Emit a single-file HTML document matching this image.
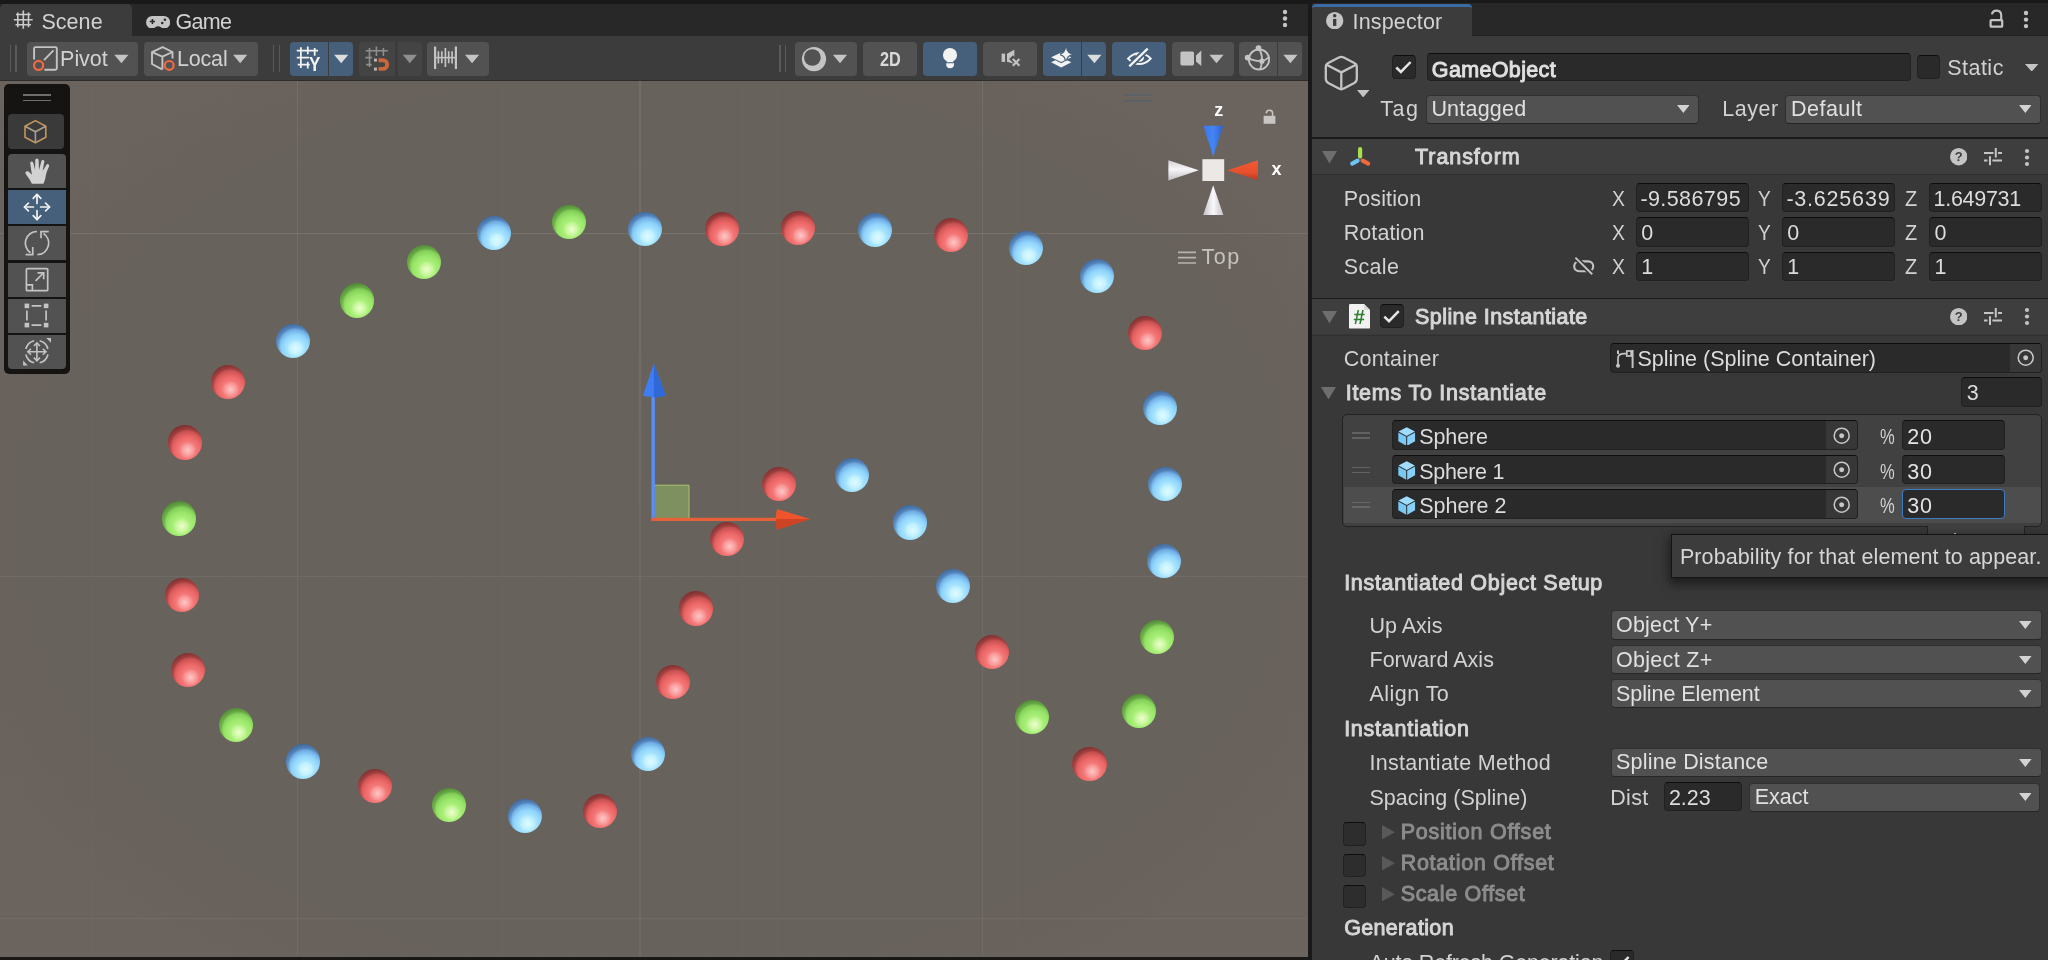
<!DOCTYPE html>
<html lang="en"><head><meta charset="utf-8"><title>Unity - Spline Instantiate</title><style>
html,body{margin:0;padding:0;background:#191919;}
body{width:2048px;height:960px;overflow:hidden;position:relative;font-family:"Liberation Sans",sans-serif;}
.b{position:absolute;box-sizing:border-box;display:block;}
.t{position:absolute;white-space:pre;line-height:1;}
#root{position:absolute;left:0;top:0;width:2048px;height:960px;will-change:transform;}
</style></head><body><div id="root">
<div class="b" style="left:0.00px;top:0.00px;width:1308.00px;height:3.50px;background:#191919;"></div>
<div class="b" style="left:0.00px;top:3.50px;width:1308.00px;height:32.00px;background:#282828;"></div>
<div class="b" style="left:0.00px;top:4.00px;width:132.00px;height:32.00px;background:#3c3c3c;border-radius:5px 5px 0 0;"></div>
<span class="t" id="t1" style="left:41.40px;top:11.70px;font-size:21.5px;color:#d2d2d2;letter-spacing:0.058px;">Scene</span>
<svg class="b" style="left:145.80px;top:15.70px;" width="24.20" height="12.50" viewBox="0 0 25 13"><path d="M6.4 0H18.6A6.4 6.4 0 0 1 25 6.4V7A6 6 0 0 1 19 13A6 6 0 0 1 15.4 11.6Q14 10.6 12.5 10.6Q11 10.6 9.6 11.6A6 6 0 0 1 6 13A6 6 0 0 1 0 7V6.4A6.4 6.4 0 0 1 6.4 0Z" fill="#c4c4c4"/><path d="M6.6 3V8.4M3.9 5.7H9.3" stroke="#282828" stroke-width="1.6" fill="none"/><circle cx="19.6" cy="4" r="1.3" fill="#282828"/><circle cx="16.8" cy="7.4" r="1.3" fill="#282828"/></svg>
<span class="t" id="t2" style="left:175.60px;top:11.70px;font-size:21.5px;color:#d2d2d2;letter-spacing:-0.754px;">Game</span>
<svg class="b" style="left:1281.30px;top:8.40px;" width="8.00" height="21.00" viewBox="0 0 8 21.0"><circle cx="4" cy="4.00" r="2.2" fill="#c4c4c4"/><circle cx="4" cy="10.50" r="2.2" fill="#c4c4c4"/><circle cx="4" cy="17.00" r="2.2" fill="#c4c4c4"/></svg>
<div class="b" style="left:0.00px;top:35.50px;width:1308.00px;height:45.00px;background:#3c3c3c;"></div>
<div class="b" style="left:0.00px;top:79.60px;width:1308.00px;height:1.00px;background:#2c2c2c;"></div>
<div class="b" style="left:9.80px;top:44.60px;width:1.30px;height:27.40px;background:#5a5a5a;"></div>
<div class="b" style="left:15.40px;top:44.60px;width:1.30px;height:27.40px;background:#5a5a5a;"></div>
<div class="b" style="left:273.20px;top:44.60px;width:1.30px;height:27.40px;background:#5a5a5a;"></div>
<div class="b" style="left:279.00px;top:44.60px;width:1.30px;height:27.40px;background:#5a5a5a;"></div>
<div class="b" style="left:779.40px;top:44.60px;width:1.30px;height:27.40px;background:#5a5a5a;"></div>
<div class="b" style="left:784.60px;top:44.60px;width:1.30px;height:27.40px;background:#5a5a5a;"></div>
<div class="b" style="left:27.00px;top:41.50px;width:111.20px;height:34.00px;background:#525252;border-radius:4px;"></div>
<span class="t" id="t3" style="left:60.10px;top:49.00px;font-size:21.5px;color:#d2d2d2;letter-spacing:-0.053px;">Pivot</span>
<div class="b" style="left:143.80px;top:41.50px;width:113.80px;height:34.00px;background:#525252;border-radius:4px;"></div>
<span class="t" id="t4" style="left:176.90px;top:49.00px;font-size:21.5px;color:#d2d2d2;letter-spacing:-0.152px;">Local</span>
<div class="b" style="left:290.00px;top:41.50px;width:37.80px;height:34.00px;background:#46607c;border-radius:4px 0 0 4px;"></div>
<div class="b" style="left:329.20px;top:41.50px;width:24.10px;height:34.00px;background:#46607c;border-radius:0 4px 4px 0;"></div>
<div class="b" style="left:359.20px;top:41.50px;width:36.30px;height:34.00px;background:#444444;border-radius:4px 0 0 4px;"></div>
<div class="b" style="left:398.20px;top:41.50px;width:23.40px;height:34.00px;background:#444444;border-radius:0 4px 4px 0;"></div>
<div class="b" style="left:427.40px;top:41.50px;width:62.00px;height:34.00px;background:#525252;border-radius:4px;"></div>
<div class="b" style="left:795.40px;top:41.50px;width:61.80px;height:34.00px;background:#525252;border-radius:4px;"></div>
<div class="b" style="left:862.60px;top:41.50px;width:54.60px;height:34.00px;background:#525252;border-radius:4px;"></div>
<span class="t" id="t5" style="left:879.80px;top:50.41px;font-size:19.6px;color:#dadada;font-weight:bold;transform:scaleX(0.83);transform-origin:0 50%;">2D</span>
<div class="b" style="left:922.60px;top:41.50px;width:54.90px;height:34.00px;background:#46607c;border-radius:4px;"></div>
<div class="b" style="left:982.90px;top:41.50px;width:54.50px;height:34.00px;background:#525252;border-radius:4px;"></div>
<div class="b" style="left:1042.80px;top:41.50px;width:37.80px;height:34.00px;background:#46607c;border-radius:4px 0 0 4px;"></div>
<div class="b" style="left:1082.20px;top:41.50px;width:24.10px;height:34.00px;background:#46607c;border-radius:0 4px 4px 0;"></div>
<div class="b" style="left:1112.10px;top:41.50px;width:54.30px;height:34.00px;background:#46607c;border-radius:4px;"></div>
<div class="b" style="left:1172.10px;top:41.50px;width:61.90px;height:34.00px;background:#525252;border-radius:4px;"></div>
<div class="b" style="left:1239.20px;top:41.50px;width:37.50px;height:34.00px;background:#525252;border-radius:4px 0 0 4px;"></div>
<div class="b" style="left:1278.40px;top:41.50px;width:23.40px;height:34.00px;background:#525252;border-radius:0 4px 4px 0;"></div>
<div class="b" style="left:0;top:80.5px;width:1308px;height:876.5px;overflow:hidden;background:radial-gradient(ellipse 760px 540px at 655px 440px,#68625c 0%,#68625c 78%,#69625c 90%,#6b635d 100%);"><div class="b" style="left:22.72px;top:0;width:1.4px;height:877px;background:rgba(255,255,255,0.013);"></div><div class="b" style="left:56.98px;top:0;width:1.4px;height:877px;background:rgba(255,255,255,0.013);"></div><div class="b" style="left:91.24px;top:0;width:1.4px;height:877px;background:rgba(255,255,255,0.013);"></div><div class="b" style="left:125.50px;top:0;width:1.4px;height:877px;background:rgba(255,255,255,0.013);"></div><div class="b" style="left:159.76px;top:0;width:1.4px;height:877px;background:rgba(255,255,255,0.013);"></div><div class="b" style="left:194.02px;top:0;width:1.4px;height:877px;background:rgba(255,255,255,0.013);"></div><div class="b" style="left:228.28px;top:0;width:1.4px;height:877px;background:rgba(255,255,255,0.013);"></div><div class="b" style="left:262.54px;top:0;width:1.4px;height:877px;background:rgba(255,255,255,0.013);"></div><div class="b" style="left:296.80px;top:0;width:1.4px;height:877px;background:linear-gradient(180deg,rgba(255,255,255,0.07) 0%,rgba(255,255,255,0.07) 25%,rgba(255,255,255,0.05) 55%,rgba(255,255,255,0.05) 100%);"></div><div class="b" style="left:331.06px;top:0;width:1.4px;height:877px;background:rgba(255,255,255,0.013);"></div><div class="b" style="left:365.32px;top:0;width:1.4px;height:877px;background:rgba(255,255,255,0.013);"></div><div class="b" style="left:399.58px;top:0;width:1.4px;height:877px;background:rgba(255,255,255,0.013);"></div><div class="b" style="left:433.84px;top:0;width:1.4px;height:877px;background:rgba(255,255,255,0.013);"></div><div class="b" style="left:468.10px;top:0;width:1.4px;height:877px;background:rgba(255,255,255,0.013);"></div><div class="b" style="left:502.36px;top:0;width:1.4px;height:877px;background:rgba(255,255,255,0.013);"></div><div class="b" style="left:536.62px;top:0;width:1.4px;height:877px;background:rgba(255,255,255,0.013);"></div><div class="b" style="left:570.88px;top:0;width:1.4px;height:877px;background:rgba(255,255,255,0.013);"></div><div class="b" style="left:605.14px;top:0;width:1.4px;height:877px;background:rgba(255,255,255,0.013);"></div><div class="b" style="left:639.40px;top:0;width:1.4px;height:877px;background:linear-gradient(180deg,rgba(255,255,255,0.07) 0%,rgba(255,255,255,0.07) 25%,rgba(255,255,255,0.05) 55%,rgba(255,255,255,0.05) 100%);"></div><div class="b" style="left:673.66px;top:0;width:1.4px;height:877px;background:rgba(255,255,255,0.013);"></div><div class="b" style="left:707.92px;top:0;width:1.4px;height:877px;background:rgba(255,255,255,0.013);"></div><div class="b" style="left:742.18px;top:0;width:1.4px;height:877px;background:rgba(255,255,255,0.013);"></div><div class="b" style="left:776.44px;top:0;width:1.4px;height:877px;background:rgba(255,255,255,0.013);"></div><div class="b" style="left:810.70px;top:0;width:1.4px;height:877px;background:rgba(255,255,255,0.013);"></div><div class="b" style="left:844.96px;top:0;width:1.4px;height:877px;background:rgba(255,255,255,0.013);"></div><div class="b" style="left:879.22px;top:0;width:1.4px;height:877px;background:rgba(255,255,255,0.013);"></div><div class="b" style="left:913.48px;top:0;width:1.4px;height:877px;background:rgba(255,255,255,0.013);"></div><div class="b" style="left:947.74px;top:0;width:1.4px;height:877px;background:rgba(255,255,255,0.013);"></div><div class="b" style="left:982.00px;top:0;width:1.4px;height:877px;background:linear-gradient(180deg,rgba(255,255,255,0.07) 0%,rgba(255,255,255,0.07) 25%,rgba(255,255,255,0.05) 55%,rgba(255,255,255,0.05) 100%);"></div><div class="b" style="left:1016.26px;top:0;width:1.4px;height:877px;background:rgba(255,255,255,0.013);"></div><div class="b" style="left:1050.52px;top:0;width:1.4px;height:877px;background:rgba(255,255,255,0.013);"></div><div class="b" style="left:1084.78px;top:0;width:1.4px;height:877px;background:rgba(255,255,255,0.013);"></div><div class="b" style="left:1119.04px;top:0;width:1.4px;height:877px;background:rgba(255,255,255,0.013);"></div><div class="b" style="left:1153.30px;top:0;width:1.4px;height:877px;background:rgba(255,255,255,0.013);"></div><div class="b" style="left:1187.56px;top:0;width:1.4px;height:877px;background:rgba(255,255,255,0.013);"></div><div class="b" style="left:1221.82px;top:0;width:1.4px;height:877px;background:rgba(255,255,255,0.013);"></div><div class="b" style="left:1256.08px;top:0;width:1.4px;height:877px;background:rgba(255,255,255,0.013);"></div><div class="b" style="left:1290.34px;top:0;width:1.4px;height:877px;background:rgba(255,255,255,0.013);"></div><div class="b" style="left:0;top:15.46px;width:1308px;height:1.2px;background:rgba(255,255,255,0.013);"></div><div class="b" style="left:0;top:49.72px;width:1308px;height:1.2px;background:rgba(255,255,255,0.013);"></div><div class="b" style="left:0;top:83.98px;width:1308px;height:1.2px;background:rgba(255,255,255,0.013);"></div><div class="b" style="left:0;top:118.24px;width:1308px;height:1.2px;background:rgba(255,255,255,0.013);"></div><div class="b" style="left:0;top:152.50px;width:1308px;height:1.2px;background:rgba(255,255,255,0.09);"></div><div class="b" style="left:0;top:186.76px;width:1308px;height:1.2px;background:rgba(255,255,255,0.013);"></div><div class="b" style="left:0;top:221.02px;width:1308px;height:1.2px;background:rgba(255,255,255,0.013);"></div><div class="b" style="left:0;top:255.28px;width:1308px;height:1.2px;background:rgba(255,255,255,0.013);"></div><div class="b" style="left:0;top:289.54px;width:1308px;height:1.2px;background:rgba(255,255,255,0.013);"></div><div class="b" style="left:0;top:323.80px;width:1308px;height:1.2px;background:rgba(255,255,255,0.013);"></div><div class="b" style="left:0;top:358.06px;width:1308px;height:1.2px;background:rgba(255,255,255,0.013);"></div><div class="b" style="left:0;top:392.32px;width:1308px;height:1.2px;background:rgba(255,255,255,0.013);"></div><div class="b" style="left:0;top:426.58px;width:1308px;height:1.2px;background:rgba(255,255,255,0.013);"></div><div class="b" style="left:0;top:460.84px;width:1308px;height:1.2px;background:rgba(255,255,255,0.013);"></div><div class="b" style="left:0;top:495.10px;width:1308px;height:1.2px;background:rgba(255,255,255,0.05);"></div><div class="b" style="left:0;top:529.36px;width:1308px;height:1.2px;background:rgba(255,255,255,0.013);"></div><div class="b" style="left:0;top:563.62px;width:1308px;height:1.2px;background:rgba(255,255,255,0.013);"></div><div class="b" style="left:0;top:597.88px;width:1308px;height:1.2px;background:rgba(255,255,255,0.013);"></div><div class="b" style="left:0;top:632.14px;width:1308px;height:1.2px;background:rgba(255,255,255,0.013);"></div><div class="b" style="left:0;top:666.40px;width:1308px;height:1.2px;background:rgba(255,255,255,0.013);"></div><div class="b" style="left:0;top:700.66px;width:1308px;height:1.2px;background:rgba(255,255,255,0.013);"></div><div class="b" style="left:0;top:734.92px;width:1308px;height:1.2px;background:rgba(255,255,255,0.013);"></div><div class="b" style="left:0;top:769.18px;width:1308px;height:1.2px;background:rgba(255,255,255,0.013);"></div><div class="b" style="left:0;top:803.44px;width:1308px;height:1.2px;background:rgba(255,255,255,0.013);"></div><div class="b" style="left:0;top:837.70px;width:1308px;height:1.2px;background:rgba(255,255,255,0.05);"></div><div class="b" style="left:0;top:871.96px;width:1308px;height:1.2px;background:rgba(255,255,255,0.013);"></div><div class="b" style="left:477.00px;top:135.00px;width:34.2px;height:34.2px;border-radius:50%;background:radial-gradient(circle 8.5px at 58% 72%, rgba(235,255,255,0.8) 0%, rgba(255,255,255,0) 100%),radial-gradient(circle 17.5px at 57% 61%, rgba(0,0,0,0) 0%, rgba(0,0,0,0) 86%, rgba(0,0,0,0.16) 100%),radial-gradient(circle 26px at 58% 72%, #b4ecff 0%, #b4ecff 22%, #90d4fc 52%, #6098d8 82%, #4a78b4 100%);"></div><div class="b" style="left:552.30px;top:124.40px;width:34.2px;height:34.2px;border-radius:50%;background:radial-gradient(circle 8.5px at 58% 72%, rgba(255,255,225,0.8) 0%, rgba(255,255,255,0) 100%),radial-gradient(circle 17.5px at 57% 61%, rgba(0,0,0,0) 0%, rgba(0,0,0,0) 86%, rgba(0,0,0,0.16) 100%),radial-gradient(circle 26px at 58% 72%, #b2f482 0%, #b2f482 22%, #9ae66a 52%, #78c450 82%, #5c9840 100%);"></div><div class="b" style="left:627.90px;top:131.20px;width:34.2px;height:34.2px;border-radius:50%;background:radial-gradient(circle 8.5px at 58% 72%, rgba(235,255,255,0.8) 0%, rgba(255,255,255,0) 100%),radial-gradient(circle 17.5px at 57% 61%, rgba(0,0,0,0) 0%, rgba(0,0,0,0) 86%, rgba(0,0,0,0.16) 100%),radial-gradient(circle 26px at 58% 72%, #b4ecff 0%, #b4ecff 22%, #90d4fc 52%, #6098d8 82%, #4a78b4 100%);"></div><div class="b" style="left:406.90px;top:164.80px;width:34.2px;height:34.2px;border-radius:50%;background:radial-gradient(circle 8.5px at 58% 72%, rgba(255,255,225,0.8) 0%, rgba(255,255,255,0) 100%),radial-gradient(circle 17.5px at 57% 61%, rgba(0,0,0,0) 0%, rgba(0,0,0,0) 86%, rgba(0,0,0,0.16) 100%),radial-gradient(circle 26px at 58% 72%, #b2f482 0%, #b2f482 22%, #9ae66a 52%, #78c450 82%, #5c9840 100%);"></div><div class="b" style="left:339.90px;top:202.90px;width:34.2px;height:34.2px;border-radius:50%;background:radial-gradient(circle 8.5px at 58% 72%, rgba(255,255,225,0.8) 0%, rgba(255,255,255,0) 100%),radial-gradient(circle 17.5px at 57% 61%, rgba(0,0,0,0) 0%, rgba(0,0,0,0) 86%, rgba(0,0,0,0.16) 100%),radial-gradient(circle 26px at 58% 72%, #b2f482 0%, #b2f482 22%, #9ae66a 52%, #78c450 82%, #5c9840 100%);"></div><div class="b" style="left:275.80px;top:243.20px;width:34.2px;height:34.2px;border-radius:50%;background:radial-gradient(circle 8.5px at 58% 72%, rgba(235,255,255,0.8) 0%, rgba(255,255,255,0) 100%),radial-gradient(circle 17.5px at 57% 61%, rgba(0,0,0,0) 0%, rgba(0,0,0,0) 86%, rgba(0,0,0,0.16) 100%),radial-gradient(circle 26px at 58% 72%, #b4ecff 0%, #b4ecff 22%, #90d4fc 52%, #6098d8 82%, #4a78b4 100%);"></div><div class="b" style="left:211.20px;top:284.40px;width:34.2px;height:34.2px;border-radius:50%;background:radial-gradient(circle 8.5px at 58% 72%, rgba(255,228,228,0.7) 0%, rgba(255,255,255,0) 100%),radial-gradient(circle 17.5px at 57% 61%, rgba(0,0,0,0) 0%, rgba(0,0,0,0) 86%, rgba(0,0,0,0.16) 100%),radial-gradient(circle 26px at 58% 72%, #f88282 0%, #f88282 22%, #ec6666 52%, #b84848 82%, #8c3636 100%);"></div><div class="b" style="left:168.10px;top:344.90px;width:34.2px;height:34.2px;border-radius:50%;background:radial-gradient(circle 8.5px at 58% 72%, rgba(255,228,228,0.7) 0%, rgba(255,255,255,0) 100%),radial-gradient(circle 17.5px at 57% 61%, rgba(0,0,0,0) 0%, rgba(0,0,0,0) 86%, rgba(0,0,0,0.16) 100%),radial-gradient(circle 26px at 58% 72%, #f88282 0%, #f88282 22%, #ec6666 52%, #b84848 82%, #8c3636 100%);"></div><div class="b" style="left:161.50px;top:420.90px;width:34.2px;height:34.2px;border-radius:50%;background:radial-gradient(circle 8.5px at 58% 72%, rgba(255,255,225,0.8) 0%, rgba(255,255,255,0) 100%),radial-gradient(circle 17.5px at 57% 61%, rgba(0,0,0,0) 0%, rgba(0,0,0,0) 86%, rgba(0,0,0,0.16) 100%),radial-gradient(circle 26px at 58% 72%, #b2f482 0%, #b2f482 22%, #9ae66a 52%, #78c450 82%, #5c9840 100%);"></div><div class="b" style="left:165.30px;top:497.10px;width:34.2px;height:34.2px;border-radius:50%;background:radial-gradient(circle 8.5px at 58% 72%, rgba(255,228,228,0.7) 0%, rgba(255,255,255,0) 100%),radial-gradient(circle 17.5px at 57% 61%, rgba(0,0,0,0) 0%, rgba(0,0,0,0) 86%, rgba(0,0,0,0.16) 100%),radial-gradient(circle 26px at 58% 72%, #f88282 0%, #f88282 22%, #ec6666 52%, #b84848 82%, #8c3636 100%);"></div><div class="b" style="left:171.30px;top:572.70px;width:34.2px;height:34.2px;border-radius:50%;background:radial-gradient(circle 8.5px at 58% 72%, rgba(255,228,228,0.7) 0%, rgba(255,255,255,0) 100%),radial-gradient(circle 17.5px at 57% 61%, rgba(0,0,0,0) 0%, rgba(0,0,0,0) 86%, rgba(0,0,0,0.16) 100%),radial-gradient(circle 26px at 58% 72%, #f88282 0%, #f88282 22%, #ec6666 52%, #b84848 82%, #8c3636 100%);"></div><div class="b" style="left:218.50px;top:627.70px;width:34.2px;height:34.2px;border-radius:50%;background:radial-gradient(circle 8.5px at 58% 72%, rgba(255,255,225,0.8) 0%, rgba(255,255,255,0) 100%),radial-gradient(circle 17.5px at 57% 61%, rgba(0,0,0,0) 0%, rgba(0,0,0,0) 86%, rgba(0,0,0,0.16) 100%),radial-gradient(circle 26px at 58% 72%, #b2f482 0%, #b2f482 22%, #9ae66a 52%, #78c450 82%, #5c9840 100%);"></div><div class="b" style="left:285.90px;top:663.90px;width:34.2px;height:34.2px;border-radius:50%;background:radial-gradient(circle 8.5px at 58% 72%, rgba(235,255,255,0.8) 0%, rgba(255,255,255,0) 100%),radial-gradient(circle 17.5px at 57% 61%, rgba(0,0,0,0) 0%, rgba(0,0,0,0) 86%, rgba(0,0,0,0.16) 100%),radial-gradient(circle 26px at 58% 72%, #b4ecff 0%, #b4ecff 22%, #90d4fc 52%, #6098d8 82%, #4a78b4 100%);"></div><div class="b" style="left:357.80px;top:688.70px;width:34.2px;height:34.2px;border-radius:50%;background:radial-gradient(circle 8.5px at 58% 72%, rgba(255,228,228,0.7) 0%, rgba(255,255,255,0) 100%),radial-gradient(circle 17.5px at 57% 61%, rgba(0,0,0,0) 0%, rgba(0,0,0,0) 86%, rgba(0,0,0,0.16) 100%),radial-gradient(circle 26px at 58% 72%, #f88282 0%, #f88282 22%, #ec6666 52%, #b84848 82%, #8c3636 100%);"></div><div class="b" style="left:432.10px;top:707.50px;width:34.2px;height:34.2px;border-radius:50%;background:radial-gradient(circle 8.5px at 58% 72%, rgba(255,255,225,0.8) 0%, rgba(255,255,255,0) 100%),radial-gradient(circle 17.5px at 57% 61%, rgba(0,0,0,0) 0%, rgba(0,0,0,0) 86%, rgba(0,0,0,0.16) 100%),radial-gradient(circle 26px at 58% 72%, #b2f482 0%, #b2f482 22%, #9ae66a 52%, #78c450 82%, #5c9840 100%);"></div><div class="b" style="left:507.70px;top:718.50px;width:34.2px;height:34.2px;border-radius:50%;background:radial-gradient(circle 8.5px at 58% 72%, rgba(235,255,255,0.8) 0%, rgba(255,255,255,0) 100%),radial-gradient(circle 17.5px at 57% 61%, rgba(0,0,0,0) 0%, rgba(0,0,0,0) 86%, rgba(0,0,0,0.16) 100%),radial-gradient(circle 26px at 58% 72%, #b4ecff 0%, #b4ecff 22%, #90d4fc 52%, #6098d8 82%, #4a78b4 100%);"></div><div class="b" style="left:583.30px;top:713.40px;width:34.2px;height:34.2px;border-radius:50%;background:radial-gradient(circle 8.5px at 58% 72%, rgba(255,228,228,0.7) 0%, rgba(255,255,255,0) 100%),radial-gradient(circle 17.5px at 57% 61%, rgba(0,0,0,0) 0%, rgba(0,0,0,0) 86%, rgba(0,0,0,0.16) 100%),radial-gradient(circle 26px at 58% 72%, #f88282 0%, #f88282 22%, #ec6666 52%, #b84848 82%, #8c3636 100%);"></div><div class="b" style="left:630.90px;top:656.60px;width:34.2px;height:34.2px;border-radius:50%;background:radial-gradient(circle 8.5px at 58% 72%, rgba(235,255,255,0.8) 0%, rgba(255,255,255,0) 100%),radial-gradient(circle 17.5px at 57% 61%, rgba(0,0,0,0) 0%, rgba(0,0,0,0) 86%, rgba(0,0,0,0.16) 100%),radial-gradient(circle 26px at 58% 72%, #b4ecff 0%, #b4ecff 22%, #90d4fc 52%, #6098d8 82%, #4a78b4 100%);"></div><div class="b" style="left:704.80px;top:131.20px;width:34.2px;height:34.2px;border-radius:50%;background:radial-gradient(circle 8.5px at 58% 72%, rgba(255,228,228,0.7) 0%, rgba(255,255,255,0) 100%),radial-gradient(circle 17.5px at 57% 61%, rgba(0,0,0,0) 0%, rgba(0,0,0,0) 86%, rgba(0,0,0,0.16) 100%),radial-gradient(circle 26px at 58% 72%, #f88282 0%, #f88282 22%, #ec6666 52%, #b84848 82%, #8c3636 100%);"></div><div class="b" style="left:780.90px;top:130.40px;width:34.2px;height:34.2px;border-radius:50%;background:radial-gradient(circle 8.5px at 58% 72%, rgba(255,228,228,0.7) 0%, rgba(255,255,255,0) 100%),radial-gradient(circle 17.5px at 57% 61%, rgba(0,0,0,0) 0%, rgba(0,0,0,0) 86%, rgba(0,0,0,0.16) 100%),radial-gradient(circle 26px at 58% 72%, #f88282 0%, #f88282 22%, #ec6666 52%, #b84848 82%, #8c3636 100%);"></div><div class="b" style="left:857.50px;top:132.30px;width:34.2px;height:34.2px;border-radius:50%;background:radial-gradient(circle 8.5px at 58% 72%, rgba(235,255,255,0.8) 0%, rgba(255,255,255,0) 100%),radial-gradient(circle 17.5px at 57% 61%, rgba(0,0,0,0) 0%, rgba(0,0,0,0) 86%, rgba(0,0,0,0.16) 100%),radial-gradient(circle 26px at 58% 72%, #b4ecff 0%, #b4ecff 22%, #90d4fc 52%, #6098d8 82%, #4a78b4 100%);"></div><div class="b" style="left:933.60px;top:137.80px;width:34.2px;height:34.2px;border-radius:50%;background:radial-gradient(circle 8.5px at 58% 72%, rgba(255,228,228,0.7) 0%, rgba(255,255,255,0) 100%),radial-gradient(circle 17.5px at 57% 61%, rgba(0,0,0,0) 0%, rgba(0,0,0,0) 86%, rgba(0,0,0,0.16) 100%),radial-gradient(circle 26px at 58% 72%, #f88282 0%, #f88282 22%, #ec6666 52%, #b84848 82%, #8c3636 100%);"></div><div class="b" style="left:1009.20px;top:150.60px;width:34.2px;height:34.2px;border-radius:50%;background:radial-gradient(circle 8.5px at 58% 72%, rgba(235,255,255,0.8) 0%, rgba(255,255,255,0) 100%),radial-gradient(circle 17.5px at 57% 61%, rgba(0,0,0,0) 0%, rgba(0,0,0,0) 86%, rgba(0,0,0,0.16) 100%),radial-gradient(circle 26px at 58% 72%, #b4ecff 0%, #b4ecff 22%, #90d4fc 52%, #6098d8 82%, #4a78b4 100%);"></div><div class="b" style="left:1079.80px;top:178.60px;width:34.2px;height:34.2px;border-radius:50%;background:radial-gradient(circle 8.5px at 58% 72%, rgba(235,255,255,0.8) 0%, rgba(255,255,255,0) 100%),radial-gradient(circle 17.5px at 57% 61%, rgba(0,0,0,0) 0%, rgba(0,0,0,0) 86%, rgba(0,0,0,0.16) 100%),radial-gradient(circle 26px at 58% 72%, #b4ecff 0%, #b4ecff 22%, #90d4fc 52%, #6098d8 82%, #4a78b4 100%);"></div><div class="b" style="left:1127.90px;top:235.40px;width:34.2px;height:34.2px;border-radius:50%;background:radial-gradient(circle 8.5px at 58% 72%, rgba(255,228,228,0.7) 0%, rgba(255,255,255,0) 100%),radial-gradient(circle 17.5px at 57% 61%, rgba(0,0,0,0) 0%, rgba(0,0,0,0) 86%, rgba(0,0,0,0.16) 100%),radial-gradient(circle 26px at 58% 72%, #f88282 0%, #f88282 22%, #ec6666 52%, #b84848 82%, #8c3636 100%);"></div><div class="b" style="left:1142.60px;top:310.60px;width:34.2px;height:34.2px;border-radius:50%;background:radial-gradient(circle 8.5px at 58% 72%, rgba(235,255,255,0.8) 0%, rgba(255,255,255,0) 100%),radial-gradient(circle 17.5px at 57% 61%, rgba(0,0,0,0) 0%, rgba(0,0,0,0) 86%, rgba(0,0,0,0.16) 100%),radial-gradient(circle 26px at 58% 72%, #b4ecff 0%, #b4ecff 22%, #90d4fc 52%, #6098d8 82%, #4a78b4 100%);"></div><div class="b" style="left:1148.10px;top:386.70px;width:34.2px;height:34.2px;border-radius:50%;background:radial-gradient(circle 8.5px at 58% 72%, rgba(235,255,255,0.8) 0%, rgba(255,255,255,0) 100%),radial-gradient(circle 17.5px at 57% 61%, rgba(0,0,0,0) 0%, rgba(0,0,0,0) 86%, rgba(0,0,0,0.16) 100%),radial-gradient(circle 26px at 58% 72%, #b4ecff 0%, #b4ecff 22%, #90d4fc 52%, #6098d8 82%, #4a78b4 100%);"></div><div class="b" style="left:761.70px;top:386.20px;width:34.2px;height:34.2px;border-radius:50%;background:radial-gradient(circle 8.5px at 58% 72%, rgba(255,228,228,0.7) 0%, rgba(255,255,255,0) 100%),radial-gradient(circle 17.5px at 57% 61%, rgba(0,0,0,0) 0%, rgba(0,0,0,0) 86%, rgba(0,0,0,0.16) 100%),radial-gradient(circle 26px at 58% 72%, #f88282 0%, #f88282 22%, #ec6666 52%, #b84848 82%, #8c3636 100%);"></div><div class="b" style="left:834.60px;top:377.00px;width:34.2px;height:34.2px;border-radius:50%;background:radial-gradient(circle 8.5px at 58% 72%, rgba(235,255,255,0.8) 0%, rgba(255,255,255,0) 100%),radial-gradient(circle 17.5px at 57% 61%, rgba(0,0,0,0) 0%, rgba(0,0,0,0) 86%, rgba(0,0,0,0.16) 100%),radial-gradient(circle 26px at 58% 72%, #b4ecff 0%, #b4ecff 22%, #90d4fc 52%, #6098d8 82%, #4a78b4 100%);"></div><div class="b" style="left:892.80px;top:424.90px;width:34.2px;height:34.2px;border-radius:50%;background:radial-gradient(circle 8.5px at 58% 72%, rgba(235,255,255,0.8) 0%, rgba(255,255,255,0) 100%),radial-gradient(circle 17.5px at 57% 61%, rgba(0,0,0,0) 0%, rgba(0,0,0,0) 86%, rgba(0,0,0,0.16) 100%),radial-gradient(circle 26px at 58% 72%, #b4ecff 0%, #b4ecff 22%, #90d4fc 52%, #6098d8 82%, #4a78b4 100%);"></div><div class="b" style="left:710.00px;top:441.40px;width:34.2px;height:34.2px;border-radius:50%;background:radial-gradient(circle 8.5px at 58% 72%, rgba(255,228,228,0.7) 0%, rgba(255,255,255,0) 100%),radial-gradient(circle 17.5px at 57% 61%, rgba(0,0,0,0) 0%, rgba(0,0,0,0) 86%, rgba(0,0,0,0.16) 100%),radial-gradient(circle 26px at 58% 72%, #f88282 0%, #f88282 22%, #ec6666 52%, #b84848 82%, #8c3636 100%);"></div><div class="b" style="left:678.70px;top:510.90px;width:34.2px;height:34.2px;border-radius:50%;background:radial-gradient(circle 8.5px at 58% 72%, rgba(255,228,228,0.7) 0%, rgba(255,255,255,0) 100%),radial-gradient(circle 17.5px at 57% 61%, rgba(0,0,0,0) 0%, rgba(0,0,0,0) 86%, rgba(0,0,0,0.16) 100%),radial-gradient(circle 26px at 58% 72%, #f88282 0%, #f88282 22%, #ec6666 52%, #b84848 82%, #8c3636 100%);"></div><div class="b" style="left:656.30px;top:584.20px;width:34.2px;height:34.2px;border-radius:50%;background:radial-gradient(circle 8.5px at 58% 72%, rgba(255,228,228,0.7) 0%, rgba(255,255,255,0) 100%),radial-gradient(circle 17.5px at 57% 61%, rgba(0,0,0,0) 0%, rgba(0,0,0,0) 86%, rgba(0,0,0,0.16) 100%),radial-gradient(circle 26px at 58% 72%, #f88282 0%, #f88282 22%, #ec6666 52%, #b84848 82%, #8c3636 100%);"></div><div class="b" style="left:936.30px;top:488.40px;width:34.2px;height:34.2px;border-radius:50%;background:radial-gradient(circle 8.5px at 58% 72%, rgba(235,255,255,0.8) 0%, rgba(255,255,255,0) 100%),radial-gradient(circle 17.5px at 57% 61%, rgba(0,0,0,0) 0%, rgba(0,0,0,0) 86%, rgba(0,0,0,0.16) 100%),radial-gradient(circle 26px at 58% 72%, #b4ecff 0%, #b4ecff 22%, #90d4fc 52%, #6098d8 82%, #4a78b4 100%);"></div><div class="b" style="left:974.80px;top:554.40px;width:34.2px;height:34.2px;border-radius:50%;background:radial-gradient(circle 8.5px at 58% 72%, rgba(255,228,228,0.7) 0%, rgba(255,255,255,0) 100%),radial-gradient(circle 17.5px at 57% 61%, rgba(0,0,0,0) 0%, rgba(0,0,0,0) 86%, rgba(0,0,0,0.16) 100%),radial-gradient(circle 26px at 58% 72%, #f88282 0%, #f88282 22%, #ec6666 52%, #b84848 82%, #8c3636 100%);"></div><div class="b" style="left:1015.20px;top:619.00px;width:34.2px;height:34.2px;border-radius:50%;background:radial-gradient(circle 8.5px at 58% 72%, rgba(255,255,225,0.8) 0%, rgba(255,255,255,0) 100%),radial-gradient(circle 17.5px at 57% 61%, rgba(0,0,0,0) 0%, rgba(0,0,0,0) 86%, rgba(0,0,0,0.16) 100%),radial-gradient(circle 26px at 58% 72%, #b2f482 0%, #b2f482 22%, #9ae66a 52%, #78c450 82%, #5c9840 100%);"></div><div class="b" style="left:1072.40px;top:666.20px;width:34.2px;height:34.2px;border-radius:50%;background:radial-gradient(circle 8.5px at 58% 72%, rgba(255,228,228,0.7) 0%, rgba(255,255,255,0) 100%),radial-gradient(circle 17.5px at 57% 61%, rgba(0,0,0,0) 0%, rgba(0,0,0,0) 86%, rgba(0,0,0,0.16) 100%),radial-gradient(circle 26px at 58% 72%, #f88282 0%, #f88282 22%, #ec6666 52%, #b84848 82%, #8c3636 100%);"></div><div class="b" style="left:1121.50px;top:613.50px;width:34.2px;height:34.2px;border-radius:50%;background:radial-gradient(circle 8.5px at 58% 72%, rgba(255,255,225,0.8) 0%, rgba(255,255,255,0) 100%),radial-gradient(circle 17.5px at 57% 61%, rgba(0,0,0,0) 0%, rgba(0,0,0,0) 86%, rgba(0,0,0,0.16) 100%),radial-gradient(circle 26px at 58% 72%, #b2f482 0%, #b2f482 22%, #9ae66a 52%, #78c450 82%, #5c9840 100%);"></div><div class="b" style="left:1139.80px;top:539.30px;width:34.2px;height:34.2px;border-radius:50%;background:radial-gradient(circle 8.5px at 58% 72%, rgba(255,255,225,0.8) 0%, rgba(255,255,255,0) 100%),radial-gradient(circle 17.5px at 57% 61%, rgba(0,0,0,0) 0%, rgba(0,0,0,0) 86%, rgba(0,0,0,0.16) 100%),radial-gradient(circle 26px at 58% 72%, #b2f482 0%, #b2f482 22%, #9ae66a 52%, #78c450 82%, #5c9840 100%);"></div><div class="b" style="left:1147.20px;top:463.20px;width:34.2px;height:34.2px;border-radius:50%;background:radial-gradient(circle 8.5px at 58% 72%, rgba(235,255,255,0.8) 0%, rgba(255,255,255,0) 100%),radial-gradient(circle 17.5px at 57% 61%, rgba(0,0,0,0) 0%, rgba(0,0,0,0) 86%, rgba(0,0,0,0.16) 100%),radial-gradient(circle 26px at 58% 72%, #b4ecff 0%, #b4ecff 22%, #90d4fc 52%, #6098d8 82%, #4a78b4 100%);"></div></div>
<div class="b" style="left:3.80px;top:83.80px;width:66.40px;height:290.00px;background:#161412;border-radius:5px;"></div>
<div class="b" style="left:23.40px;top:94.40px;width:27.60px;height:1.40px;background:#6e6e6e;"></div>
<div class="b" style="left:23.40px;top:99.90px;width:27.60px;height:1.40px;background:#6e6e6e;"></div>
<div class="b" style="left:8.40px;top:114.40px;width:55.80px;height:34.40px;background:#3a3a3a;border-radius:4px;"></div>
<div class="b" style="left:8.40px;top:154.00px;width:57.40px;height:34.20px;background:#525252;border-radius:4px 4px 0 0;"></div>
<div class="b" style="left:8.40px;top:190.10px;width:57.40px;height:34.20px;background:#46607c;border-radius:0;"></div>
<div class="b" style="left:8.40px;top:226.30px;width:57.40px;height:34.20px;background:#525252;border-radius:0;"></div>
<div class="b" style="left:8.40px;top:262.60px;width:57.40px;height:34.20px;background:#525252;border-radius:0;"></div>
<div class="b" style="left:8.40px;top:298.80px;width:57.40px;height:34.20px;background:#525252;border-radius:0;"></div>
<div class="b" style="left:8.40px;top:335.00px;width:57.40px;height:34.20px;background:#525252;border-radius:0 0 4px 4px;"></div>
<svg class="b" style="left:24.70px;top:157.60px;" width="26.20" height="26.05" viewBox="0 0 25 26" preserveAspectRatio="none"><path d="M6.6 25.6Q4.6 21 1 16.4Q-0.4 14.2 1.4 13.4Q3 12.8 4.6 14.6L6.6 16.8L5 5.4Q4.8 3.6 6.2 3.4Q7.6 3.2 8 5L9.6 12L9.8 2.2Q9.8 0.4 11.4 0.4Q13 0.4 13 2.2L13.4 12L15.6 3.2Q16 1.6 17.4 2Q18.8 2.4 18.4 4L16.8 13L20.4 7Q21.2 5.6 22.4 6.4Q23.6 7.2 22.8 8.8Q20.4 14 19.8 18Q19.4 22 17.6 25.6Z" fill="#d2d2d2"/></svg>
<svg class="b" style="left:23.00px;top:193.40px;" width="28.00" height="28.00" viewBox="0 0 28 28"><g fill="none" stroke="#f2f2f2" stroke-width="1.7" stroke-linecap="round" stroke-linejoin="round"><path d="M14 1.6V10.4M14 17.6V26.4M1.6 14H10.4M17.6 14H26.4"/><path d="M10.2 5.4L14 1.4L17.8 5.4M10.2 22.6L14 26.6L17.8 22.6M5.4 10.2L1.4 14L5.4 17.8M22.6 10.2L26.6 14L22.6 17.8"/></g></svg>
<svg class="b" style="left:24.00px;top:230.40px;" width="26.00" height="27.00" viewBox="0 0 26 27"><g fill="none" stroke="#c4c4c4" stroke-width="1.7" stroke-linejoin="miter"><path d="M13 1.5A11.6 11.6 0 0 0 6.5 22.7M13.5 24.7A11.6 11.6 0 0 0 19.5 3.5"/><path d="M1.6 24.7H8.75V17M24.75 1.6H17V8.2"/></g></svg>
<svg class="b" style="left:24.40px;top:303.40px;" width="25.00" height="25.00" viewBox="0 0 25 25"><g fill="#c4c4c4"><rect x="0.6" y="0.6" width="4.6" height="4.6"/><rect x="19.8" y="0.6" width="4.6" height="4.6"/><rect x="0.6" y="19.8" width="4.6" height="4.6"/><rect x="19.8" y="19.8" width="4.6" height="4.6"/></g><g stroke="#c4c4c4" stroke-width="1.7"><path d="M7.6 2.9H17.4M7.6 22.1H17.4M2.9 7.6V17.4M22.1 7.6V17.4"/></g></svg>
<div class="b" style="left:1123.20px;top:94.20px;width:28.40px;height:1.80px;background:#5b6167;"></div>
<div class="b" style="left:1123.20px;top:99.80px;width:28.40px;height:1.80px;background:#5b6167;"></div>
<span class="t" id="t6" style="left:1214.20px;top:101.46px;font-size:18px;color:#ffffff;font-weight:bold;text-transform:none;">z</span>
<span class="t" id="t7" style="left:1271.60px;top:160.06px;font-size:18px;color:#ffffff;font-weight:bold;">x</span>
<svg class="b" style="left:1263.00px;top:109.40px;" width="13.00" height="15.40" viewBox="0 0 13 15.4"><path d="M9.6 7V4.6A3.2 3.2 0 0 0 3.2 4.4" fill="none" stroke="#c8c6c4" stroke-width="1.5"/><rect x="0.6" y="6.8" width="11.8" height="8" fill="#c8c6c4"/></svg>
<svg class="b" style="left:1165.00px;top:123.00px;" width="96.00" height="95.00" viewBox="0 0 96 95"><defs><linearGradient id="gb" x1="0" x2="1"><stop offset="0" stop-color="#3c78ee"/><stop offset="0.5" stop-color="#4484f4"/><stop offset="1" stop-color="#2f60cc"/></linearGradient><linearGradient id="gr" x1="0" x2="0" y1="0" y2="1"><stop offset="0" stop-color="#f05a34"/><stop offset="0.6" stop-color="#e8502c"/><stop offset="1" stop-color="#b83c22"/></linearGradient><linearGradient id="gw1" x1="0" x2="0" y1="0" y2="1"><stop offset="0" stop-color="#d2d0d2"/><stop offset="0.45" stop-color="#f8f6f8"/><stop offset="1" stop-color="#c2c0c4"/></linearGradient><linearGradient id="gw2" x1="0" x2="1"><stop offset="0" stop-color="#c4c2c6"/><stop offset="0.5" stop-color="#f8f8fa"/><stop offset="1" stop-color="#c4c2c6"/></linearGradient></defs><path d="M38.4 2.8H58.2L48.2 33.8Z" fill="url(#gb)"/><path d="M93 37.2V57.2L62.4 47.2Z" fill="url(#gr)"/><path d="M3.4 37.2V57.4L33.8 47.2Z" fill="url(#gw1)"/><path d="M38.2 92H58.4L48.2 62.2Z" fill="url(#gw2)"/><rect x="37.4" y="36.2" width="21.8" height="21.8" fill="#ece8e6"/></svg>
<svg class="b" style="left:1178.20px;top:250.60px;" width="18.00" height="13.40" viewBox="0 0 18 13.4"><g stroke="#b8b4b0" stroke-width="1.7"><path d="M0 1.4H18M0 6.7H18M0 12H18"/></g></svg>
<span class="t" id="t8" style="left:1201.60px;top:247.10px;font-size:21.5px;color:#c6c2be;letter-spacing:1.464px;">Top</span>
<svg class="b" style="left:0.00px;top:0.00px;pointer-events:none;" width="2048.00" height="960.00" viewBox="0 0 2048 960"><g stroke="#cacaca" stroke-width="1.6" fill="none"><path d="M17.8 12.5V27.3M23.3 10.5V28.8M28.5 12.5V27.3M16 14.5H30.7M13.8 19.7H32.7M15.5 24.8H31"/></g><g fill="none" stroke="#c4c4c4" stroke-width="1.9"><path d="M34.1 59.6V48.6Q34.1 47.1 35.6 47.1H55.3Q56.8 47.1 56.8 48.6V68.2Q56.8 69.7 55.3 69.7H44.4"/><path d="M44 60.1L53.5 50.4"/></g><circle cx="38.6" cy="65.4" r="4.55" fill="none" stroke="#f06a44" stroke-width="2.2"/><path d="M114.30000000000001 54.8H128.5L121.4 63.2Z" fill="#c4c4c4"/><g fill="none" stroke="#c4c4c4" stroke-width="1.9" stroke-linejoin="round"><path d="M162 69.4L152 64V52.2L162.6 47.2L172.5 52V58.6"/><path d="M152 52.2L162.4 56.6L172.5 52M162.4 56.6V69.4"/></g><circle cx="169.2" cy="65.4" r="4.4" fill="none" stroke="#f06a44" stroke-width="2.2"/><path d="M233.1 54.8H247.29999999999998L240.2 63.2Z" fill="#c4c4c4"/><g stroke="#f2f2f2" stroke-width="1.75" fill="none"><path d="M300.9 47.3V67.9M307.8 46.4V54.2M307.8 61.7V68.5M314.7 48.1V55.7M296.8 50.7H318M296.8 57.6H309M297.7 64.7H309.7"/></g><text transform="translate(314.6 71.1) scale(0.83 1)" x="0" y="0" text-anchor="middle" font-family="Liberation Sans, sans-serif" font-weight="bold" font-size="20.6" fill="#f2f2f2">Y</text><path d="M334.09999999999997 54.8H348.3L341.2 63.2Z" fill="#dcdcdc"/><g stroke="#8e8e8e" stroke-width="1.6" fill="none"><path d="M369.5 48.1V67M376.4 46.6V56.1M383.4 47.9V56.1M365.7 50.7H387.9M365.4 57.6H372.1M366.1 64.6H371.7"/></g><rect x="374" y="58.6" width="2.9" height="3" fill="#b8b8b8"/><rect x="374" y="67.6" width="2.9" height="3" fill="#b8b8b8"/><path d="M378.5 60.2H382.85A4.35 4.35 0 0 1 382.85 68.9H378.5" fill="none" stroke="#c8663c" stroke-width="3.9"/><path d="M402.7 54.8H416.90000000000003L409.8 63.2Z" fill="#8f8f8f"/><g stroke="#c4c4c4" fill="none"><path d="M435.1 46.4V68.9M455.9 46.4V68.9" stroke-width="2.2"/><path d="M438.4 51.2V63.6M441.8 51.2V63.2M445.4 48.1V67M448.7 51.2V63.2M452.1 51.2V63.6" stroke-width="1.7"/><path d="M435 57.6H456" stroke-width="1.5"/></g><path d="M465.0 54.8H479.20000000000005L472.1 63.2Z" fill="#c4c4c4"/><circle cx="814" cy="59.1" r="12.1" fill="#c4c4c4"/><circle cx="812.35" cy="57.5" r="8.35" fill="#525252"/><path d="M832.9 54.8H847.1L840 63.2Z" fill="#c4c4c4"/><circle cx="950" cy="55" r="7.05" fill="#f2f2f2"/><path d="M946.2 63.2H954V64.6A3.9 3.6 0 0 1 946.2 64.6Z" fill="#f2f2f2"/><path d="M946.8 60H953.2V62.2H946.8Z" fill="#f2f2f2"/><rect x="1001.6" y="53.6" width="3.5" height="8.3" fill="#c4c4c4"/><path d="M1007 53.8L1014.3 49.8V63.8L1007 61.8Z" fill="#c4c4c4"/><path d="M1011 57.2L1021 67.4" stroke="#525252" stroke-width="5.4" fill="none"/><path d="M1012.8 59.1L1019.4 65.7M1019.4 59.1L1012.8 65.7" stroke="#c4c4c4" stroke-width="2.1" fill="none"/><path d="M1051.1 57.2L1061.2 52.4L1071.4 57.2L1061.2 62Z" fill="#f2f2f2"/><path d="M1051.1 62.2L1055.4 60.2L1061.2 63.2L1067 60.2L1071.4 62.2L1061.2 67.6Z" fill="#f2f2f2"/><path d="M1066 47.9Q1066.8 53.4 1072 54.3Q1066.8 55.2 1066 60.3Q1065.2 55.2 1060.3 54.3Q1065.2 53.4 1066 47.9Z" fill="#f2f2f2" stroke="#46607c" stroke-width="2.6" paint-order="stroke"/><path d="M1087.3000000000002 54.8H1101.5L1094.4 63.2Z" fill="#dcdcdc"/><path d="M1128.1 58.6Q1133 53.2 1139.4 53.2Q1145.8 53.2 1150.7 58.6Q1145.8 64 1139.4 64Q1133 64 1128.1 58.6Z" fill="none" stroke="#f2f2f2" stroke-width="2.1"/><circle cx="1139.6" cy="57.4" r="4.4" fill="#f2f2f2"/><path d="M1129.3 66.3L1147.7 48.6" stroke="#46607c" stroke-width="6" fill="none"/><path d="M1129.3 66.3L1147.7 48.6" stroke="#f2f2f2" stroke-width="2.3" fill="none"/><rect x="1180.4" y="51.4" width="13.6" height="14" rx="1.6" fill="#c4c4c4"/><path d="M1196 55.6L1201.3 50.6V66L1196 61.4Z" fill="#c4c4c4"/><path d="M1209.4 54.8H1223.6L1216.5 63.2Z" fill="#c4c4c4"/><g fill="none" stroke="#c4c4c4" stroke-width="1.8"><circle cx="1259" cy="59.4" r="10.1"/><path d="M1258.5 48.1Q1262.6 54 1261.9 61.2Q1261.6 66 1260 69.4M1247.4 57.6Q1253 61.4 1261.9 61.2Q1266 60.4 1268.8 57"/></g><circle cx="1258.5" cy="48.1" r="2.9" fill="#c4c4c4"/><circle cx="1247.6" cy="57.6" r="2.9" fill="#c4c4c4"/><circle cx="1261.9" cy="61.2" r="2.6" fill="#c4c4c4"/><path d="M1283.3000000000002 54.8H1297.5L1290.4 63.2Z" fill="#c4c4c4"/><rect x="654.8" y="485.2" width="34.2" height="33" fill="rgb(146,182,100)" fill-opacity="0.55"/><path d="M654.8 485.2H689V518" fill="none" stroke="#a9c470" stroke-width="1"/><path d="M653.2 520.8V394" stroke="#5b8df2" stroke-width="3.4" fill="none"/><path d="M653.9 363.4L665.6 395.4Q653.9 398.8 642.8 395.4Z" fill="#3f7df2"/><path d="M653.9 363.4L665.6 395.4Q660 397.2 653.9 397.4Z" fill="#3168d8"/><path d="M651.6 519.4H779" stroke="#e8603a" stroke-width="3.2" fill="none"/><path d="M810 518.9L777 509Q774.4 519.4 777 529.8Z" fill="#f0542c"/><path d="M810 518.9L777 529.8Q775.6 524 775.6 518.9Z" fill="#cc4424"/><g fill="none" stroke-width="1.6" stroke-linejoin="round"><path d="M35.4 120.6L45.8 126.2V137.2L35.4 142.8L25 137.2V126.2Z" stroke="#c4965c"/><path d="M25 126.2L35.4 131.8L45.8 126.2" stroke="#b0a08c"/><path d="M35.4 131.8V142.8" stroke="#9aa0a8"/></g><g fill="none" stroke="#c4c4c4" stroke-width="1.7"><rect x="26.4" y="268.6" width="21.3" height="22.1" rx="1"/><path d="M26.4 284.8H32.4V290.7"/><path d="M35.6 280.8L43.4 273M37.5 272.8H43.7V279.2"/></g><g fill="none" stroke="#c4c4c4" stroke-width="1.6"><path d="M47.96 354.51A11.4 11.4 0 0 1 39.66 362.81M34.14 362.81A11.4 11.4 0 0 1 25.84 354.51M25.84 348.99A11.4 11.4 0 0 1 34.14 340.69M39.66 340.69A11.4 11.4 0 0 1 47.96 348.99"/><path d="M36.9 343V360.6M28 351.75H45.8"/><path d="M33.9 346L36.9 342.8L39.9 346M33.9 357.6L36.9 360.8L39.9 357.6M31 348.75L27.8 351.75L31 354.75M42.8 348.75L46 351.75L42.8 354.75"/></g><path d="M46.25 338H51V342.75Z" fill="#c4c4c4"/><path d="M23.1 360.6V365.5H27.75Z" fill="#c4c4c4"/></svg>
<div class="b" style="left:0.00px;top:957.00px;width:1308.00px;height:3.00px;background:#191919;"></div>
<div class="b" style="left:1308.00px;top:0.00px;width:3.50px;height:960.00px;background:#191919;"></div>
<div class="b" style="left:1311.50px;top:3.00px;width:737.00px;height:32.50px;background:#282828;"></div>
<div class="b" style="left:1311.50px;top:35.50px;width:737.00px;height:102.00px;background:#3c3c3c;"></div>
<div class="b" style="left:1311.50px;top:137.50px;width:737.00px;height:823.00px;background:#383838;"></div>
<div class="b" style="left:1311.50px;top:3.50px;width:160.00px;height:32.00px;background:#3c3c3c;border-radius:4px 4px 0 0;border-top:3px solid #3a6ca3;"></div>
<svg class="b" style="left:1326.40px;top:11.90px;" width="17.40" height="17.40" viewBox="0 0 20 20"><circle cx="10" cy="10" r="10" fill="#c4c4c4"/><rect x="8.1" y="8" width="3.8" height="8" fill="#3c3c3c"/><circle cx="10" cy="4.4" r="2" fill="#3c3c3c"/></svg>
<span class="t" id="t9" style="left:1352.60px;top:11.60px;font-size:21.5px;color:#d2d2d2;letter-spacing:0.145px;">Inspector</span>
<svg class="b" style="left:1985.00px;top:6.00px;" width="24.00" height="26.00" viewBox="0 0 24 26"><path d="M6.9 8.4A4.7 4.7 0 0 1 16.2 9.2V13.6" fill="none" stroke="#c4c4c4" stroke-width="2.1"/><rect x="5.6" y="14.2" width="11.6" height="6.5" rx="0.8" fill="none" stroke="#c4c4c4" stroke-width="2.2"/></svg>
<div class="b" style="left:1471.50px;top:34.50px;width:576.50px;height:1.20px;background:#212121;"></div>
<svg class="b" style="left:2021.50px;top:8.50px;" width="8.00" height="21.10" viewBox="0 0 8 21.1"><circle cx="4" cy="4.00" r="2.2" fill="#c4c4c4"/><circle cx="4" cy="10.60" r="2.2" fill="#c4c4c4"/><circle cx="4" cy="17.10" r="2.2" fill="#c4c4c4"/></svg>
<svg class="b" style="left:1323.50px;top:55.00px;" width="35.00" height="36.40" viewBox="0 0 35 36.4"><g fill="none" stroke="#c4c4c4" stroke-width="2.3" stroke-linejoin="round" stroke-linecap="round"><path d="M14.82 2.56Q17.30 1.30 19.78 2.56L30.32 7.94Q32.80 9.20 32.80 11.98L32.80 23.82Q32.80 26.60 30.32 27.93L19.78 33.57Q17.30 34.90 14.82 33.57L4.28 27.93Q1.80 26.60 1.80 23.82L1.80 11.98Q1.80 9.20 4.28 7.94Z"/><path d="M2.6 9.8L17.3 17.4L32 9.8M17.3 17.4V34"/></g></svg>
<svg class="b" style="left:1356.80px;top:89.80px;" width="12.40" height="7.40" viewBox="0 0 12.4 7.4"><path d="M0 0H12.4L6.2 7.4Z" fill="#c4c4c4"/></svg>
<div class="b" style="left:1392.40px;top:55.40px;width:23.40px;height:23.40px;background:#2a2a2a;border-radius:4px;border:1px solid #212121;border-top-color:#0d0d0d;"></div>
<svg class="b" style="left:1392.40px;top:55.40px;" width="23.40" height="23.40" viewBox="0 0 23.4 23.4"><path d="M4.3 12.5L8.9 17L18.6 7" fill="none" stroke="#e6e6e6" stroke-width="2.5" stroke-linecap="butt" stroke-linejoin="miter"/></svg>
<div class="b" style="left:1427.30px;top:52.50px;width:483.40px;height:28.80px;background:#2a2a2a;border-radius:4px;border:1px solid #212121;border-top-color:#0d0d0d;"></div>
<span class="t" id="t10" style="left:1431.85px;top:59.50px;font-size:21.5px;color:#e0e0e0;-webkit-text-stroke:0.95px #e0e0e0;letter-spacing:0.346px;">GameObject</span>
<div class="b" style="left:1917.00px;top:55.40px;width:23.40px;height:23.40px;background:#2a2a2a;border-radius:4px;border:1px solid #212121;border-top-color:#0d0d0d;"></div>
<span class="t" id="t11" style="left:1947.20px;top:58.10px;font-size:21.5px;color:#d2d2d2;letter-spacing:0.484px;">Static</span>
<svg class="b" style="left:2025.20px;top:63.80px;" width="13.40" height="7.60" viewBox="0 0 13.4 7.6"><path d="M0 0H13.4L6.7 7.6Z" fill="#c4c4c4"/></svg>
<span class="t" id="t12" style="left:1380.20px;top:98.50px;font-size:21.5px;color:#d2d2d2;letter-spacing:1.564px;">Tag</span>
<div class="b" style="left:1426.00px;top:94.50px;width:272.60px;height:29.00px;background:#515151;border-radius:4px;border:1px solid #303030;border-bottom:1.6px solid #262626;"></div>
<svg class="b" style="left:1676.60px;top:105.00px;" width="12.60" height="8.00" viewBox="0 0 12.6 8"><path d="M0 0H12.6L6.3 8Z" fill="#d2d2d2"/></svg>
<span class="t" id="t13" style="left:1431.40px;top:98.50px;font-size:21.5px;color:#e0e0e0;letter-spacing:0.207px;">Untagged</span>
<span class="t" id="t14" style="left:1722.20px;top:98.50px;font-size:21.5px;color:#d2d2d2;letter-spacing:0.551px;">Layer</span>
<div class="b" style="left:1785.00px;top:94.50px;width:255.60px;height:29.00px;background:#515151;border-radius:4px;border:1px solid #303030;border-bottom:1.6px solid #262626;"></div>
<svg class="b" style="left:2018.80px;top:105.00px;" width="12.60" height="8.00" viewBox="0 0 12.6 8"><path d="M0 0H12.6L6.3 8Z" fill="#d2d2d2"/></svg>
<span class="t" id="t15" style="left:1790.90px;top:98.50px;font-size:21.5px;color:#e0e0e0;letter-spacing:0.513px;">Default</span>
<div class="b" style="left:1311.50px;top:137.20px;width:737.00px;height:1.50px;background:#1a1a1a;"></div>
<div class="b" style="left:1311.50px;top:138.70px;width:737.00px;height:35.30px;background:#3e3e3e;"></div>
<div class="b" style="left:1311.50px;top:174.00px;width:737.00px;height:1.00px;background:#303030;"></div>
<svg class="b" style="left:1321.80px;top:151.30px;" width="15.00" height="12.40" viewBox="0 0 15 12.4"><path d="M0 0H15L7.5 12.4Z" fill="#6e6e6e"/></svg>
<svg class="b" style="left:1348.50px;top:145.60px;" width="23.00" height="21.60" viewBox="0 0 23 21.6"><g stroke-linecap="round" stroke-width="4.2"><path d="M11.1 3V10.6" stroke="#a6e04a"/><path d="M8.6 14.6L3.2 17.6" stroke="#6cc4f4"/><path d="M13.6 14.6L19.2 17.6" stroke="#ee6a3c"/></g></svg>
<span class="t" id="t16" style="left:1415.05px;top:147.30px;font-size:21.5px;color:#d6d6d6;-webkit-text-stroke:0.95px #d6d6d6;letter-spacing:0.929px;">Transform</span>
<svg class="b" style="left:1949.80px;top:148.30px;" width="17.40" height="17.40" viewBox="0 0 20 20"><circle cx="10" cy="10" r="10" fill="#c4c4c4"/><text x="10" y="15.2" text-anchor="middle" font-family="Liberation Sans, sans-serif" font-weight="bold" font-size="15" fill="#3e3e3e">?</text></svg>
<svg class="b" style="left:1984.00px;top:148.40px;" width="18.40" height="17.20" viewBox="0 0 18.4 17.2"><g stroke="#c4c4c4" stroke-width="2" fill="none"><path d="M0 5H9.5M14 5H18.4M11.8 0V9.5"/><path d="M0 12.6H3.5M8.4 12.6H18.4M6 8.2V17.2"/></g></svg>
<svg class="b" style="left:2023.30px;top:146.50px;" width="8.00" height="21.00" viewBox="0 0 8 21.0"><circle cx="4" cy="4.00" r="2.1" fill="#c4c4c4"/><circle cx="4" cy="10.50" r="2.1" fill="#c4c4c4"/><circle cx="4" cy="17.00" r="2.1" fill="#c4c4c4"/></svg>
<span class="t" id="t17" style="left:1343.70px;top:188.90px;font-size:21.5px;color:#d2d2d2;letter-spacing:0.143px;">Position</span>
<span class="t" id="t18" style="left:1611.90px;top:188.90px;font-size:21.5px;color:#d2d2d2;transform:scaleX(0.9);transform-origin:0 50%;">X</span>
<div class="b" style="left:1635.60px;top:183.00px;width:113.80px;height:29.40px;background:#2a2a2a;border-radius:4px;border:1px solid #212121;border-top-color:#0d0d0d;"></div>
<span class="t" id="t19" style="left:1640.40px;top:188.90px;font-size:21.5px;color:#dcdcdc;letter-spacing:0.420px;">-9.586795</span>
<span class="t" id="t20" style="left:1758.00px;top:188.90px;font-size:21.5px;color:#d2d2d2;transform:scaleX(0.89);transform-origin:0 50%;">Y</span>
<div class="b" style="left:1781.60px;top:183.00px;width:113.80px;height:29.40px;background:#2a2a2a;border-radius:4px;border:1px solid #212121;border-top-color:#0d0d0d;"></div>
<span class="t" id="t21" style="left:1786.40px;top:188.90px;font-size:21.5px;color:#dcdcdc;letter-spacing:0.795px;">-3.625639</span>
<span class="t" id="t22" style="left:1905.20px;top:188.90px;font-size:21.5px;color:#d2d2d2;transform:scaleX(0.93);transform-origin:0 50%;">Z</span>
<div class="b" style="left:1928.80px;top:183.00px;width:113.60px;height:29.40px;background:#2a2a2a;border-radius:4px;border:1px solid #212121;border-top-color:#0d0d0d;"></div>
<span class="t" id="t23" style="left:1933.60px;top:188.90px;font-size:21.5px;color:#dcdcdc;letter-spacing:-0.298px;">1.649731</span>
<span class="t" id="t24" style="left:1343.70px;top:223.10px;font-size:21.5px;color:#d2d2d2;letter-spacing:0.087px;">Rotation</span>
<span class="t" id="t25" style="left:1611.90px;top:223.10px;font-size:21.5px;color:#d2d2d2;transform:scaleX(0.9);transform-origin:0 50%;">X</span>
<div class="b" style="left:1635.60px;top:217.30px;width:113.80px;height:29.40px;background:#2a2a2a;border-radius:4px;border:1px solid #212121;border-top-color:#0d0d0d;"></div>
<span class="t" id="t26" style="left:1641.20px;top:223.10px;font-size:21.5px;color:#dcdcdc;">0</span>
<span class="t" id="t27" style="left:1758.00px;top:223.10px;font-size:21.5px;color:#d2d2d2;transform:scaleX(0.89);transform-origin:0 50%;">Y</span>
<div class="b" style="left:1781.60px;top:217.30px;width:113.80px;height:29.40px;background:#2a2a2a;border-radius:4px;border:1px solid #212121;border-top-color:#0d0d0d;"></div>
<span class="t" id="t28" style="left:1787.20px;top:223.10px;font-size:21.5px;color:#dcdcdc;">0</span>
<span class="t" id="t29" style="left:1905.20px;top:223.10px;font-size:21.5px;color:#d2d2d2;transform:scaleX(0.93);transform-origin:0 50%;">Z</span>
<div class="b" style="left:1928.80px;top:217.30px;width:113.60px;height:29.40px;background:#2a2a2a;border-radius:4px;border:1px solid #212121;border-top-color:#0d0d0d;"></div>
<span class="t" id="t30" style="left:1934.40px;top:223.10px;font-size:21.5px;color:#dcdcdc;">0</span>
<span class="t" id="t31" style="left:1343.70px;top:257.40px;font-size:21.5px;color:#d2d2d2;letter-spacing:0.351px;">Scale</span>
<span class="t" id="t32" style="left:1611.90px;top:257.40px;font-size:21.5px;color:#d2d2d2;transform:scaleX(0.9);transform-origin:0 50%;">X</span>
<div class="b" style="left:1635.60px;top:251.80px;width:113.80px;height:29.40px;background:#2a2a2a;border-radius:4px;border:1px solid #212121;border-top-color:#0d0d0d;"></div>
<span class="t" id="t33" style="left:1641.20px;top:257.40px;font-size:21.5px;color:#dcdcdc;">1</span>
<span class="t" id="t34" style="left:1758.00px;top:257.40px;font-size:21.5px;color:#d2d2d2;transform:scaleX(0.89);transform-origin:0 50%;">Y</span>
<div class="b" style="left:1781.60px;top:251.80px;width:113.80px;height:29.40px;background:#2a2a2a;border-radius:4px;border:1px solid #212121;border-top-color:#0d0d0d;"></div>
<span class="t" id="t35" style="left:1787.20px;top:257.40px;font-size:21.5px;color:#dcdcdc;">1</span>
<span class="t" id="t36" style="left:1905.20px;top:257.40px;font-size:21.5px;color:#d2d2d2;transform:scaleX(0.93);transform-origin:0 50%;">Z</span>
<div class="b" style="left:1928.80px;top:251.80px;width:113.60px;height:29.40px;background:#2a2a2a;border-radius:4px;border:1px solid #212121;border-top-color:#0d0d0d;"></div>
<span class="t" id="t37" style="left:1934.40px;top:257.40px;font-size:21.5px;color:#dcdcdc;">1</span>
<svg class="b" style="left:1570.00px;top:255.00px;" width="28.00" height="22.00" viewBox="0 0 28 22"><rect x="4.2" y="6.4" width="19" height="9.8" rx="4.9" fill="none" stroke="#c4c4c4" stroke-width="2.1"/><path d="M5.8 3L21.8 18.8" stroke="#383838" stroke-width="5.2" fill="none"/><path d="M5.4 2.6L22.2 19.2" stroke="#c4c4c4" stroke-width="1.9" fill="none"/></svg>
<div class="b" style="left:1311.50px;top:297.80px;width:737.00px;height:1.50px;background:#1a1a1a;"></div>
<div class="b" style="left:1311.50px;top:299.30px;width:737.00px;height:35.20px;background:#3e3e3e;"></div>
<div class="b" style="left:1311.50px;top:334.50px;width:737.00px;height:1.00px;background:#303030;"></div>
<svg class="b" style="left:1321.80px;top:310.80px;" width="15.00" height="12.40" viewBox="0 0 15 12.4"><path d="M0 0H15L7.5 12.4Z" fill="#6e6e6e"/></svg>
<svg class="b" style="left:1349.00px;top:304.30px;" width="21.00" height="24.60" viewBox="0 0 21 24.6"><path d="M1.2 0H15L21 6V23.4Q21 24.6 19.8 24.6H1.2Q0 24.6 0 23.4V1.2Q0 0 1.2 0Z" fill="#f2f2f2"/><path d="M15 0L21 6H16.2Q15 6 15 4.8Z" fill="#d8d8d8"/><text x="10.2" y="19.6" text-anchor="middle" font-family="Liberation Sans, sans-serif" font-weight="bold" font-size="20.5" fill="#2f7d32">#</text></svg>
<div class="b" style="left:1380.40px;top:304.20px;width:23.60px;height:23.60px;background:#2a2a2a;border-radius:4px;border:1px solid #212121;border-top-color:#0d0d0d;"></div>
<svg class="b" style="left:1380.40px;top:304.20px;" width="23.60" height="23.60" viewBox="0 0 23.4 23.4"><path d="M4.3 12.5L8.9 17L18.6 7" fill="none" stroke="#e6e6e6" stroke-width="2.5" stroke-linecap="butt" stroke-linejoin="miter"/></svg>
<span class="t" id="t38" style="left:1415.05px;top:306.80px;font-size:21.5px;color:#d6d6d6;-webkit-text-stroke:0.95px #d6d6d6;letter-spacing:0.426px;">Spline Instantiate</span>
<svg class="b" style="left:1949.80px;top:307.90px;" width="17.40" height="17.40" viewBox="0 0 20 20"><circle cx="10" cy="10" r="10" fill="#c4c4c4"/><text x="10" y="15.2" text-anchor="middle" font-family="Liberation Sans, sans-serif" font-weight="bold" font-size="15" fill="#3e3e3e">?</text></svg>
<svg class="b" style="left:1984.00px;top:308.00px;" width="18.40" height="17.20" viewBox="0 0 18.4 17.2"><g stroke="#c4c4c4" stroke-width="2" fill="none"><path d="M0 5H9.5M14 5H18.4M11.8 0V9.5"/><path d="M0 12.6H3.5M8.4 12.6H18.4M6 8.2V17.2"/></g></svg>
<svg class="b" style="left:2023.30px;top:306.10px;" width="8.00" height="21.00" viewBox="0 0 8 21.0"><circle cx="4" cy="4.00" r="2.1" fill="#c4c4c4"/><circle cx="4" cy="10.50" r="2.1" fill="#c4c4c4"/><circle cx="4" cy="17.00" r="2.1" fill="#c4c4c4"/></svg>
<span class="t" id="t39" style="left:1343.70px;top:348.90px;font-size:21.5px;color:#d2d2d2;letter-spacing:0.246px;">Container</span>
<div class="b" style="left:1609.80px;top:343.00px;width:432.20px;height:29.60px;background:#2a2a2a;border-radius:4px;border:1px solid #212121;border-top-color:#0d0d0d;"></div>
<div class="b" style="left:2009.80px;top:344.00px;width:31.20px;height:27.60px;background:#373737;border-radius:0 3px 3px 0;"></div>
<svg class="b" style="left:2016.80px;top:349.20px;" width="17.40" height="17.40" viewBox="0 0 17.4 17.4"><circle cx="8.7" cy="8.7" r="7.5" fill="none" stroke="#c8c8c8" stroke-width="1.5"/><circle cx="8.7" cy="8.7" r="2.5" fill="#c8c8c8"/></svg>
<svg class="b" style="left:1614.60px;top:349.60px;" width="19.20" height="18.20" viewBox="0 0 19.2 18.2"><g fill="none" stroke="#c4c4c4" stroke-width="1.7"><path d="M3 15.6V8C3 4.6 6 3.6 9.4 3.6H12"/><rect x="11.8" y="1" width="4.4" height="5" /><path d="M17.6 0V18.2" stroke-width="2"/><path d="M3 0.4V4" stroke-width="2"/></g><circle cx="3" cy="15.8" r="2" fill="#c4c4c4"/></svg>
<span class="t" id="t40" style="left:1637.40px;top:349.10px;font-size:21.5px;color:#dcdcdc;letter-spacing:-0.018px;">Spline (Spline Container)</span>
<svg class="b" style="left:1321.40px;top:386.60px;" width="15.00" height="12.40" viewBox="0 0 15 12.4"><path d="M0 0H15L7.5 12.4Z" fill="#6e6e6e"/></svg>
<span class="t" id="t41" style="left:1345.65px;top:383.00px;font-size:21.5px;color:#d6d6d6;-webkit-text-stroke:0.95px #d6d6d6;letter-spacing:0.766px;">Items To Instantiate</span>
<div class="b" style="left:1960.70px;top:377.30px;width:81.30px;height:30.00px;background:#2a2a2a;border-radius:4px;border:1px solid #212121;border-top-color:#0d0d0d;"></div>
<span class="t" id="t42" style="left:1966.70px;top:383.30px;font-size:21.5px;color:#dcdcdc;">3</span>
<div class="b" style="left:1342.40px;top:413.60px;width:699.60px;height:113.40px;background:#414141;border-radius:5px;border:1.2px solid #222222;"></div>
<div class="b" style="left:1343.60px;top:487.20px;width:697.20px;height:35.60px;background:#4d4d4d;"></div>
<div class="b" style="left:1927.20px;top:526.00px;width:98.00px;height:30.00px;background:#414141;border-radius:0 0 4px 4px;border:1px solid #242424;border-top:none;"></div>
<div class="b" style="left:1954.00px;top:533.00px;width:2.00px;height:2.00px;background:#c4c4c4;"></div>
<div class="b" style="left:1352.00px;top:432.30px;width:17.60px;height:1.50px;background:#626262;"></div>
<div class="b" style="left:1352.00px;top:437.10px;width:17.60px;height:1.50px;background:#626262;"></div>
<div class="b" style="left:1392.40px;top:420.00px;width:465.40px;height:29.80px;background:#2a2a2a;border-radius:4px;border:1px solid #212121;border-top-color:#0d0d0d;"></div>
<div class="b" style="left:1825.80px;top:421.00px;width:31.20px;height:27.80px;background:#373737;border-radius:0 3px 3px 0;"></div>
<svg class="b" style="left:1832.90px;top:426.70px;" width="17.40" height="17.40" viewBox="0 0 17.4 17.4"><circle cx="8.7" cy="8.7" r="7.5" fill="none" stroke="#c8c8c8" stroke-width="1.5"/><circle cx="8.7" cy="8.7" r="2.5" fill="#c8c8c8"/></svg>
<svg class="b" style="left:1398.20px;top:426.60px;" width="17.40" height="18.80" viewBox="0 0 17.4 18.8"><path d="M8.7 0.3L16.9 4.6L8.7 9L0.5 4.6Z" fill="#a0dcff"/><path d="M0.3 5.5L8.2 9.8V18.7L0.3 14.3Z" fill="#78c8f4"/><path d="M17.1 5.5L9.2 9.8V18.7L17.1 14.3Z" fill="#86d0f8"/></svg>
<span class="t" id="t43" style="left:1419.20px;top:427.10px;font-size:21.5px;color:#dcdcdc;letter-spacing:-0.089px;">Sphere</span>
<span class="t" id="t44" style="left:1879.60px;top:427.10px;font-size:21.5px;color:#d2d2d2;transform:scaleX(0.77);transform-origin:0 50%;">%</span>
<div class="b" style="left:1902.30px;top:420.00px;width:102.60px;height:29.80px;background:#2a2a2a;border-radius:4px;border:1px solid #212121;border-top-color:#0d0d0d;"></div>
<span class="t" id="t45" style="left:1907.20px;top:427.10px;font-size:21.5px;color:#e4e4e4;letter-spacing:0.878px;">20</span>
<div class="b" style="left:1352.00px;top:466.95px;width:17.60px;height:1.50px;background:#626262;"></div>
<div class="b" style="left:1352.00px;top:471.75px;width:17.60px;height:1.50px;background:#626262;"></div>
<div class="b" style="left:1392.40px;top:454.65px;width:465.40px;height:29.80px;background:#2a2a2a;border-radius:4px;border:1px solid #212121;border-top-color:#0d0d0d;"></div>
<div class="b" style="left:1825.80px;top:455.65px;width:31.20px;height:27.80px;background:#373737;border-radius:0 3px 3px 0;"></div>
<svg class="b" style="left:1832.90px;top:461.35px;" width="17.40" height="17.40" viewBox="0 0 17.4 17.4"><circle cx="8.7" cy="8.7" r="7.5" fill="none" stroke="#c8c8c8" stroke-width="1.5"/><circle cx="8.7" cy="8.7" r="2.5" fill="#c8c8c8"/></svg>
<svg class="b" style="left:1398.20px;top:461.25px;" width="17.40" height="18.80" viewBox="0 0 17.4 18.8"><path d="M8.7 0.3L16.9 4.6L8.7 9L0.5 4.6Z" fill="#a0dcff"/><path d="M0.3 5.5L8.2 9.8V18.7L0.3 14.3Z" fill="#78c8f4"/><path d="M17.1 5.5L9.2 9.8V18.7L17.1 14.3Z" fill="#86d0f8"/></svg>
<span class="t" id="t46" style="left:1419.20px;top:461.75px;font-size:21.5px;color:#dcdcdc;letter-spacing:-0.295px;">Sphere 1</span>
<span class="t" id="t47" style="left:1879.60px;top:461.75px;font-size:21.5px;color:#d2d2d2;transform:scaleX(0.77);transform-origin:0 50%;">%</span>
<div class="b" style="left:1902.30px;top:454.65px;width:102.60px;height:29.80px;background:#2a2a2a;border-radius:4px;border:1px solid #212121;border-top-color:#0d0d0d;"></div>
<span class="t" id="t48" style="left:1907.20px;top:461.75px;font-size:21.5px;color:#e4e4e4;letter-spacing:0.878px;">30</span>
<div class="b" style="left:1352.00px;top:501.60px;width:17.60px;height:1.50px;background:#666666;"></div>
<div class="b" style="left:1352.00px;top:506.40px;width:17.60px;height:1.50px;background:#666666;"></div>
<div class="b" style="left:1392.40px;top:489.30px;width:465.40px;height:29.80px;background:#2a2a2a;border-radius:4px;border:1px solid #212121;border-top-color:#0d0d0d;"></div>
<div class="b" style="left:1825.80px;top:490.30px;width:31.20px;height:27.80px;background:#373737;border-radius:0 3px 3px 0;"></div>
<svg class="b" style="left:1832.90px;top:496.00px;" width="17.40" height="17.40" viewBox="0 0 17.4 17.4"><circle cx="8.7" cy="8.7" r="7.5" fill="none" stroke="#c8c8c8" stroke-width="1.5"/><circle cx="8.7" cy="8.7" r="2.5" fill="#c8c8c8"/></svg>
<svg class="b" style="left:1398.20px;top:495.90px;" width="17.40" height="18.80" viewBox="0 0 17.4 18.8"><path d="M8.7 0.3L16.9 4.6L8.7 9L0.5 4.6Z" fill="#a0dcff"/><path d="M0.3 5.5L8.2 9.8V18.7L0.3 14.3Z" fill="#78c8f4"/><path d="M17.1 5.5L9.2 9.8V18.7L17.1 14.3Z" fill="#86d0f8"/></svg>
<span class="t" id="t49" style="left:1419.20px;top:496.40px;font-size:21.5px;color:#dcdcdc;letter-spacing:-0.009px;">Sphere 2</span>
<span class="t" id="t50" style="left:1879.60px;top:496.40px;font-size:21.5px;color:#d2d2d2;transform:scaleX(0.77);transform-origin:0 50%;">%</span>
<div class="b" style="left:1902.30px;top:489.30px;width:102.60px;height:29.80px;background:#2a2a2a;border-radius:4px;border:1.8px solid #3d7ac4;"></div>
<span class="t" id="t51" style="left:1907.20px;top:496.40px;font-size:21.5px;color:#e4e4e4;letter-spacing:0.878px;">30</span>
<div class="b" style="left:1671.40px;top:534.40px;width:380.00px;height:43.40px;background:#3c3c3c;border:1.6px solid #141414;box-shadow:0 4px 10px 2px rgba(0,0,0,0.5);"></div>
<span class="t" id="t52" style="left:1679.90px;top:546.50px;font-size:21.5px;color:#d6d6d6;letter-spacing:0.109px;">Probability for that element to appear.</span>
<span class="t" id="t53" style="left:1344.15px;top:572.80px;font-size:21.5px;color:#d6d6d6;-webkit-text-stroke:0.95px #d6d6d6;letter-spacing:0.698px;">Instantiated Object Setup</span>
<span class="t" id="t54" style="left:1369.50px;top:615.60px;font-size:21.5px;color:#d2d2d2;letter-spacing:0.002px;">Up Axis</span>
<div class="b" style="left:1610.90px;top:610.40px;width:430.80px;height:29.20px;background:#515151;border-radius:4px;border:1px solid #303030;border-bottom:1.6px solid #262626;"></div>
<svg class="b" style="left:2019.20px;top:621.00px;" width="12.60" height="8.00" viewBox="0 0 12.6 8"><path d="M0 0H12.6L6.3 8Z" fill="#d2d2d2"/></svg>
<span class="t" id="t55" style="left:1616.00px;top:615.20px;font-size:21.5px;color:#e0e0e0;letter-spacing:0.197px;">Object Y+</span>
<span class="t" id="t56" style="left:1369.50px;top:650.10px;font-size:21.5px;color:#d2d2d2;letter-spacing:0.012px;">Forward Axis</span>
<div class="b" style="left:1610.90px;top:644.90px;width:430.80px;height:29.20px;background:#515151;border-radius:4px;border:1px solid #303030;border-bottom:1.6px solid #262626;"></div>
<svg class="b" style="left:2019.20px;top:655.50px;" width="12.60" height="8.00" viewBox="0 0 12.6 8"><path d="M0 0H12.6L6.3 8Z" fill="#d2d2d2"/></svg>
<span class="t" id="t57" style="left:1616.00px;top:649.70px;font-size:21.5px;color:#e0e0e0;letter-spacing:0.298px;">Object Z+</span>
<span class="t" id="t58" style="left:1369.50px;top:684.20px;font-size:21.5px;color:#d2d2d2;letter-spacing:0.456px;">Align To</span>
<div class="b" style="left:1610.90px;top:679.00px;width:430.80px;height:29.20px;background:#515151;border-radius:4px;border:1px solid #303030;border-bottom:1.6px solid #262626;"></div>
<svg class="b" style="left:2019.20px;top:689.60px;" width="12.60" height="8.00" viewBox="0 0 12.6 8"><path d="M0 0H12.6L6.3 8Z" fill="#d2d2d2"/></svg>
<span class="t" id="t59" style="left:1616.00px;top:683.80px;font-size:21.5px;color:#e0e0e0;letter-spacing:-0.071px;">Spline Element</span>
<span class="t" id="t60" style="left:1344.15px;top:718.60px;font-size:21.5px;color:#d6d6d6;-webkit-text-stroke:0.95px #d6d6d6;letter-spacing:0.746px;">Instantiation</span>
<span class="t" id="t61" style="left:1369.50px;top:752.70px;font-size:21.5px;color:#d2d2d2;letter-spacing:0.258px;">Instantiate Method</span>
<div class="b" style="left:1610.90px;top:748.30px;width:430.80px;height:29.20px;background:#515151;border-radius:4px;border:1px solid #303030;border-bottom:1.6px solid #262626;"></div>
<svg class="b" style="left:2019.20px;top:758.90px;" width="12.60" height="8.00" viewBox="0 0 12.6 8"><path d="M0 0H12.6L6.3 8Z" fill="#d2d2d2"/></svg>
<span class="t" id="t62" style="left:1616.00px;top:752.30px;font-size:21.5px;color:#e0e0e0;letter-spacing:0.201px;">Spline Distance</span>
<span class="t" id="t63" style="left:1369.50px;top:787.50px;font-size:21.5px;color:#d2d2d2;letter-spacing:0.009px;">Spacing (Spline)</span>
<span class="t" id="t64" style="left:1610.30px;top:787.50px;font-size:21.5px;color:#d2d2d2;letter-spacing:0.290px;">Dist</span>
<div class="b" style="left:1664.20px;top:781.80px;width:77.80px;height:29.60px;background:#2a2a2a;border-radius:4px;border:1px solid #212121;border-top-color:#0d0d0d;"></div>
<span class="t" id="t65" style="left:1669.00px;top:787.50px;font-size:21.5px;color:#dcdcdc;letter-spacing:-0.086px;">2.23</span>
<div class="b" style="left:1749.40px;top:782.50px;width:291.00px;height:29.20px;background:#515151;border-radius:4px;border:1px solid #303030;border-bottom:1.6px solid #262626;"></div>
<svg class="b" style="left:2018.60px;top:793.10px;" width="12.60" height="8.00" viewBox="0 0 12.6 8"><path d="M0 0H12.6L6.3 8Z" fill="#d2d2d2"/></svg>
<span class="t" id="t66" style="left:1754.70px;top:787.10px;font-size:21.5px;color:#e0e0e0;letter-spacing:-0.020px;">Exact</span>
<div class="b" style="left:1342.50px;top:822.40px;width:23.40px;height:23.40px;background:#2d2d2d;border-radius:4px;border:1px solid #212121;border-top-color:#0d0d0d;"></div>
<svg class="b" style="left:1381.80px;top:824.60px;" width="13.00" height="14.40" viewBox="0 0 13 14.4"><path d="M0 0L13 7.2L0 14.4Z" fill="#595959"/></svg>
<span class="t" id="t67" style="left:1400.65px;top:821.60px;font-size:21.5px;color:#8c8c8c;-webkit-text-stroke:0.95px #8c8c8c;letter-spacing:0.769px;">Position Offset</span>
<div class="b" style="left:1342.50px;top:853.55px;width:23.40px;height:23.40px;background:#2d2d2d;border-radius:4px;border:1px solid #212121;border-top-color:#0d0d0d;"></div>
<svg class="b" style="left:1381.80px;top:855.75px;" width="13.00" height="14.40" viewBox="0 0 13 14.4"><path d="M0 0L13 7.2L0 14.4Z" fill="#595959"/></svg>
<span class="t" id="t68" style="left:1400.65px;top:852.60px;font-size:21.5px;color:#8c8c8c;-webkit-text-stroke:0.95px #8c8c8c;letter-spacing:0.727px;">Rotation Offset</span>
<div class="b" style="left:1342.50px;top:884.70px;width:23.40px;height:23.40px;background:#2d2d2d;border-radius:4px;border:1px solid #212121;border-top-color:#0d0d0d;"></div>
<svg class="b" style="left:1381.80px;top:886.90px;" width="13.00" height="14.40" viewBox="0 0 13 14.4"><path d="M0 0L13 7.2L0 14.4Z" fill="#595959"/></svg>
<span class="t" id="t69" style="left:1400.65px;top:883.60px;font-size:21.5px;color:#8c8c8c;-webkit-text-stroke:0.95px #8c8c8c;letter-spacing:0.680px;">Scale Offset</span>
<span class="t" id="t70" style="left:1344.15px;top:918.00px;font-size:21.5px;color:#d6d6d6;-webkit-text-stroke:0.95px #d6d6d6;letter-spacing:0.345px;">Generation</span>
<span class="t" id="t71" style="left:1369.50px;top:952.70px;font-size:21.5px;color:#d2d2d2;letter-spacing:-0.179px;">Auto Refresh Generation</span>
<div class="b" style="left:1610.40px;top:949.80px;width:23.40px;height:23.40px;background:#2a2a2a;border-radius:4px;border:1px solid #212121;border-top-color:#0d0d0d;"></div>
<svg class="b" style="left:1610.40px;top:949.80px;" width="23.40" height="23.40" viewBox="0 0 23.4 23.4"><path d="M4.3 12.5L8.9 17L18.6 7" fill="none" stroke="#e6e6e6" stroke-width="2.5" stroke-linecap="butt" stroke-linejoin="miter"/></svg>
</div></body></html>
